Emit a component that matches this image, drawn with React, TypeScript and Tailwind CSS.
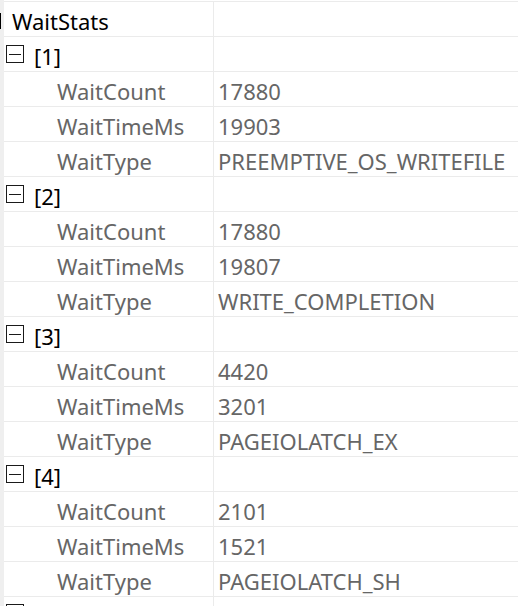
const groups = [
  { id: 1, count: "17880", time: "19903", type: "PREEMPTIVE_OS_WRITEFILE" },
  { id: 2, count: "17880", time: "19807", type: "WRITE_COMPLETION" },
  { id: 3, count: "4420", time: "3201", type: "PAGEIOLATCH_EX" },
  { id: 4, count: "2101", time: "1521", type: "PAGEIOLATCH_SH" },
]

function MinusBox() {
  return (
    <span className="flex h-[18px] w-[18px] shrink-0 items-center justify-center border border-[#1a1a1a] bg-white">
      <span className="h-px w-[12px] bg-[#1a1a1a]" />
    </span>
  )
}

function Row({ left, right }: { left: React.ReactNode; right?: string }) {
  return (
    <div className="flex h-[35px] border-t border-[#ebebeb]">
      <div className="flex w-[214px] shrink-0 items-center border-r border-[#ebebeb]">{left}</div>
      <div className="flex items-center pl-[4px] pt-[3px] text-[#666666]">{right}</div>
    </div>
  )
}

export default function App() {
  return (
    <div
      className="relative h-[606px] w-[518px] overflow-hidden bg-white text-[22px] leading-none"
      style={{ fontFamily: '"Segoe UI", "Noto Sans", sans-serif' }}
    >
      <div className="absolute left-0 top-0 h-full w-[4px] bg-[#efefef]" />
      <div className="h-px" />
      <Row
        left={
          <div className="relative flex h-full items-center pl-[12px] pt-[3px] text-black">
            <span className="absolute left-0 top-[11px] h-[16px] w-px bg-black" />
            WaitStats
          </div>
        }
      />
      {groups.map((g) => (
        <div key={g.id}>
          <Row
            left={
              <div className="flex items-center gap-[10px] pl-[6px] text-black">
                <MinusBox />
                <span className="pt-[3px]">[{g.id}]</span>
              </div>
            }
          />
          <Row left={<span className="pl-[57px] pt-[3px] text-[#666666]">WaitCount</span>} right={g.count} />
          <Row left={<span className="pl-[57px] pt-[3px] text-[#666666]">WaitTimeMs</span>} right={g.time} />
          <Row left={<span className="pl-[57px] pt-[3px] text-[#666666]">WaitType</span>} right={g.type} />
        </div>
      ))}
      <Row
        left={
          <div className="flex self-start pl-[6px] pt-[7px]">
            <MinusBox />
          </div>
        }
      />
    </div>
  )
}
